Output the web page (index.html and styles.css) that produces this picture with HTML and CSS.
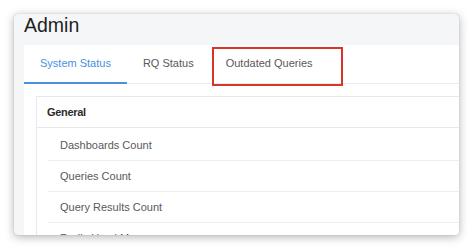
FILE: index.html
```html
<!DOCTYPE html>
<html>
<head>
<meta charset="utf-8">
<link rel="stylesheet" href="styles.css">
</head>
<body>
<div class="window">
  <h1 class="title">Admin</h1>
  <div class="card">
    <div class="tabs">
      <div class="tab active">System Status</div>
      <div class="tab">RQ Status</div>
      <div class="tab">Outdated Queries</div>
    </div>
    <div class="content">
      <div class="panel">
        <div class="panel-head">General</div>
        <div class="rows">
          <div class="row">Dashboards Count</div>
          <div class="row">Queries Count</div>
          <div class="row">Query Results Count</div>
          <div class="row">Redis Used Memory</div>
        </div>
      </div>
    </div>
  </div>
  <div class="highlight"></div>
</div>
</body>
</html>
```

FILE: styles.css
```css
html, body {
  margin: 0;
  padding: 0;
  background: #ffffff;
  width: 474px;
  height: 250px;
  overflow: hidden;
  font-family: "Liberation Sans", Arial, sans-serif;
}

.window {
  position: relative;
  margin: 14px 0 0 14px;
  width: 445px;
  height: 221px;
  background: #f5f6f8;
  border-radius: 4px;
  box-shadow: 0 2px 10px rgba(0, 0, 0, 0.3), 0 0 1px rgba(0, 0, 0, 0.3);
  overflow: hidden;
}

.title {
  margin: 0;
  height: 31px;
  padding-left: 10px;
  font-size: 19.5px;
  line-height: 22px;
  font-weight: 400;
  color: #1f1f1f;
}

.card {
  margin-left: 10px;
  background: #ffffff;
  height: 190px;
}

.tabs {
  display: flex;
  height: 38px;
  border-bottom: 1px solid #ececec;
}

.tab {
  padding: 0 16px;
  height: 37px;
  line-height: 37px;
  font-size: 11px;
  color: #595959;
  border-bottom: 2px solid transparent;
  margin-bottom: -1px;
}

.tab.active {
  color: #4a8fe0;
  border-bottom-color: #4a8fe0;
}

.content {
  padding: 12px 0 0 12px;
}

.panel {
  border: 1px solid #e8e8e8;
  border-right: none;
}

.panel-head {
  height: 30px;
  line-height: 30px;
  padding-left: 10px;
  font-size: 11px;
  font-weight: 700;
  letter-spacing: -0.3px;
  color: #2b2b2b;
  border-bottom: 1px solid #e8e8e8;
}

.rows {
  padding: 2px 0 0 11px;
}

.row {
  height: 30px;
  line-height: 30px;
  padding-left: 12px;
  font-size: 11px;
  color: #595959;
  border-bottom: 1px solid #efefef;
}

.highlight {
  position: absolute;
  left: 198px;
  top: 33px;
  width: 127px;
  height: 35px;
  border: 2px solid #d8342a;
}
```
